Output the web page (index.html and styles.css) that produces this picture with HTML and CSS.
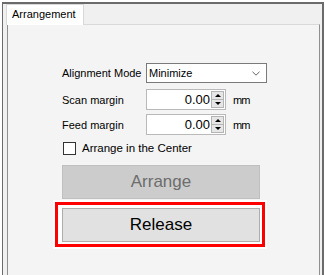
FILE: index.html
```html
<!DOCTYPE html>
<html>
<head>
<meta charset="utf-8">
<link rel="stylesheet" href="styles.css">
</head>
<body>
<div class="frame">
  <div class="tabs"><div class="tab">Arrangement</div></div>
  <div class="panel">
    <div class="form">
      <div class="row row-select">
        <span class="lbl">Alignment Mode</span>
        <div class="select">
          <span class="sel-text">Minimize</span>
          <svg class="chev" width="8" height="5" viewBox="0 0 8 5"><path d="M0.5 0.8 L4 4.2 L7.5 0.8" fill="none" stroke="#666" stroke-width="1"/></svg>
        </div>
      </div>
      <div class="row row-num">
        <span class="lbl">Scan margin</span>
        <div class="num">
          <span class="val">0.00</span>
          <div class="spin">
            <div class="sb"><span class="tri-up"></span></div>
            <div class="sb"><span class="tri-dn"></span></div>
          </div>
        </div>
        <span class="unit">mm</span>
      </div>
      <div class="row row-num row-num2">
        <span class="lbl">Feed margin</span>
        <div class="num">
          <span class="val">0.00</span>
          <div class="spin">
            <div class="sb"><span class="tri-up"></span></div>
            <div class="sb"><span class="tri-dn"></span></div>
          </div>
        </div>
        <span class="unit">mm</span>
      </div>
      <div class="check"><span class="cbox"></span><span class="ctext">Arrange in the Center</span></div>
      <div class="btn btn-disabled">Arrange</div>
      <div class="hl"><div class="btn">Release</div></div>
    </div>
  </div>
</div>
</body>
</html>
```
FILE: styles.css
```css
html, body {
  margin: 0;
  padding: 0;
  background: #ffffff;
}
body {
  width: 325px;
  height: 275px;
  overflow: hidden;
  font-family: "Liberation Sans", Arial, sans-serif;
  font-size: 11px;
  color: #000;
}
.frame {
  margin: 2px 0 0 2px;
  width: 319px;
  height: 273px;
  box-sizing: content-box;
  border-top: 2px solid #6b6b6b;
  border-left: 1px solid #6b6b6b;
  border-right: 2px solid #6b6b6b;
  background: #f0f0f0;
  display: flex;
  flex-direction: column;
}
.tabs {
  display: flex;
  padding-left: 3px;
  height: 20px;
}
.tab {
  width: 78px;
  box-sizing: border-box;
  height: 21px;
  border: 1px solid #d9d9d9;
  border-bottom: none;
  background: #fff;
  padding-left: 5px;
  line-height: 19px;
  position: relative;
  z-index: 1;
}
.panel {
  margin-left: 4px;
  width: 313px;
  box-sizing: border-box;
  flex: 1;
  border: 1px solid #8f8f8f;
  border-top-color: #d9d9d9;
  border-bottom: none;
  background: #f4f4f4;
}
.form {
  padding: 38px 0 0 54px;
}
.row {
  display: flex;
  align-items: center;
}
.lbl {
  width: 84px;
}
.row-select {
  height: 20px;
  margin-bottom: 6px;
}
.select {
  width: 121px;
  height: 20px;
  box-sizing: border-box;
  border: 1px solid #7a7a7a;
  background: #fff;
  display: flex;
  align-items: center;
  justify-content: space-between;
  padding: 0 6px 0 2px;
}
.chev {
  display: block;
  margin-top: 1px;
}
.row-num {
  height: 21px;
  margin-bottom: 4px;
}
.num {
  width: 80px;
  height: 21px;
  box-sizing: border-box;
  border: 1px solid #b9b9b9;
  background: #fff;
  display: flex;
  align-items: center;
  justify-content: flex-end;
  padding-right: 1px;
}
.val {
  font-size: 13px;
  margin-right: 1px;
}
.spin {
  display: flex;
  flex-direction: column;
  width: 13px;
  height: 17px;
}
.sb {
  flex: 1;
  background: #e6e6e6;
  border: 1px solid #b4b4b4;
  display: flex;
  align-items: center;
  justify-content: center;
}
.sb + .sb {
  border-top: none;
}
.tri-up {
  width: 0;
  height: 0;
  border-left: 3px solid transparent;
  border-right: 3px solid transparent;
  border-bottom: 3px solid #000;
}
.tri-dn {
  width: 0;
  height: 0;
  border-left: 3px solid transparent;
  border-right: 3px solid transparent;
  border-top: 3px solid #000;
}
.unit {
  margin-left: 7px;
  letter-spacing: -1px;
}
.check {
  display: flex;
  align-items: center;
  margin-top: 6px;
  height: 14px;
}
.cbox {
  width: 13px;
  height: 13px;
  box-sizing: border-box;
  border: 1px solid #333;
  background: #fff;
  margin-left: 1px;
  margin-right: 6px;
}
.ctext {
  font-size: 11.5px;
}
.btn {
  width: 198px;
  height: 34px;
  box-sizing: border-box;
  border: 1px solid #adadad;
  background: #e1e1e1;
  font-size: 17px;
  display: flex;
  align-items: center;
  justify-content: center;
}
.btn-disabled {
  margin-top: 10px;
  background: #cccccc;
  border-color: #bfbfbf;
  color: #6d6d6d;
}
.hl {
  margin-top: 3px;
  margin-left: -7px;
  width: max-content;
  border: 3px solid #ff0000;
  padding: 3px 2px 2px 4px;
  background: #fff;
  box-shadow: 0 0 0 2px #fff;
}
```
